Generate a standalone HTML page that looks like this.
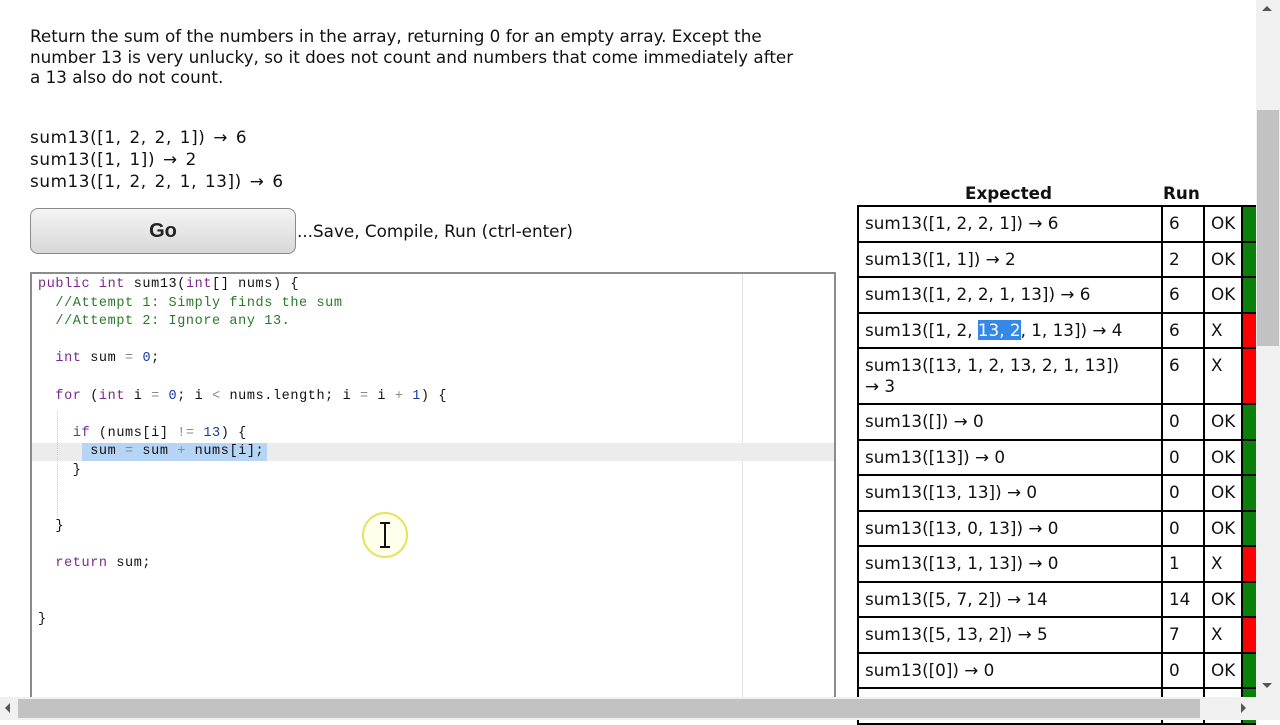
<!DOCTYPE html>
<html><head><meta charset="utf-8"><style>
*{margin:0;padding:0;box-sizing:border-box}
body{width:1280px;height:720px;overflow:hidden;background:#fff;position:relative;font-family:"DejaVu Sans","Liberation Sans",sans-serif;color:#111}
.t{position:absolute;font-size:16.8px;white-space:nowrap}
.go{position:absolute;left:30px;top:208px;width:266px;height:46px;border:1px solid #8a8a8a;border-radius:8px;background:linear-gradient(#f4f4f4,#d8d8d8);font-family:"Liberation Sans",sans-serif;font-weight:bold;font-size:20px;text-align:center;line-height:44px;color:#222}
.ed{position:absolute;left:30px;top:272px;width:806px;height:440px;border:2px solid #8c8c8c;border-bottom:none}
.code{position:absolute;left:38px;font-family:"Liberation Mono",monospace;font-size:13.5px;white-space:pre;color:#111;letter-spacing:0.6px}
.k{color:#7a2a8c}.c{color:#2a7a2a}.n{color:#1a3aa0}.o{color:#888}
table{position:absolute;left:857px;top:205px;border-collapse:collapse;font-size:16.8px}
td{border:2px solid #000;padding:0 6px;height:35.5px;vertical-align:top;padding-top:6px;line-height:21px}
tr{height:35.5px}
td.e{width:304px}td.r{width:42px}td.s{width:38px}td.g{width:14px;background:#0a800a;border-right:none}td.x{width:14px;background:#f00;border-right:none}
</style></head><body>
<div class="t" style="left:30px;top:26px;line-height:20.6px">Return the sum of the numbers in the array, returning 0 for an empty array. Except the<br>number 13 is very unlucky, so it does not count and numbers that come immediately after<br>a 13 also do not count.</div>
<div class="t" style="left:30px;top:126px;line-height:22px;word-spacing:2px;letter-spacing:0.6px">sum13([1, 2, 2, 1]) → 6<br>sum13([1, 1]) → 2<br>sum13([1, 2, 2, 1, 13]) → 6</div>
<div class="go">Go</div>
<div class="t" style="left:297px;top:221px">...Save, Compile, Run (ctrl-enter)</div>
<div class="ed"></div>
<div style="position:absolute;left:742px;top:274px;width:1px;height:423px;background:#e4e4e4"></div>
<div style="position:absolute;left:32px;top:443px;width:802px;height:18px;background:#ececec"></div>
<div style="position:absolute;left:82px;top:443px;width:185px;height:18px;background:#b6d4f6"></div>
<div style="position:absolute;left:57px;top:412px;width:1px;height:105px;border-left:1px dotted #ccc"></div>
<div class="code" style="top:276px;line-height:18.6px"><span class="k">public int</span> sum13(<span class="k">int</span>[] nums) {
  <span class="c">//Attempt 1: Simply finds the sum</span>
  <span class="c">//Attempt 2: Ignore any 13.</span>

  <span class="k">int</span> sum <span class="o">=</span> <span class="n">0</span>;

  <span class="k">for</span> (<span class="k">int</span> i <span class="o">=</span> <span class="n">0</span>; i <span class="o">&lt;</span> nums.length; i <span class="o">=</span> i <span class="o">+</span> <span class="n">1</span>) {

    <span class="k">if</span> (nums[i] <span class="o">!=</span> <span class="n">13</span>) {
      sum <span class="o">=</span> sum <span class="o">+</span> nums[i];
    }


  }

  <span class="k">return</span> sum;


}</div>
<div style="position:absolute;left:362px;top:512px;width:46px;height:46px;border-radius:50%;border:2px solid #e8e060;background:rgba(255,255,200,0.35)"></div>
<div style="position:absolute;left:384px;top:523px;width:2px;height:24px;background:#111"></div>
<div style="position:absolute;left:380px;top:522px;width:10px;height:2px;background:#111"></div>
<div style="position:absolute;left:380px;top:546px;width:10px;height:2px;background:#111"></div>
<div style="position:absolute;left:965px;top:183px;font-weight:bold;font-size:16.8px">Expected</div>
<div style="position:absolute;left:1163px;top:183px;font-weight:bold;font-size:16.8px">Run</div>
<table>
<tr><td class="e">sum13([1, 2, 2, 1]) → 6</td><td class="r">6</td><td class="s">OK</td><td class="g"></td></tr>
<tr><td class="e">sum13([1, 1]) → 2</td><td class="r">2</td><td class="s">OK</td><td class="g"></td></tr>
<tr><td class="e">sum13([1, 2, 2, 1, 13]) → 6</td><td class="r">6</td><td class="s">OK</td><td class="g"></td></tr>
<tr><td class="e">sum13([1, 2, <span style="background:#3388e8;color:#fff">13, 2</span>, 1, 13]) → 4</td><td class="r">6</td><td class="s">X</td><td class="x"></td></tr>
<tr style="height:56px"><td class="e" style="height:56px">sum13([13, 1, 2, 13, 2, 1, 13])<br>→ 3</td><td class="r">6</td><td class="s">X</td><td class="x"></td></tr>
<tr><td class="e">sum13([]) → 0</td><td class="r">0</td><td class="s">OK</td><td class="g"></td></tr>
<tr><td class="e">sum13([13]) → 0</td><td class="r">0</td><td class="s">OK</td><td class="g"></td></tr>
<tr><td class="e">sum13([13, 13]) → 0</td><td class="r">0</td><td class="s">OK</td><td class="g"></td></tr>
<tr><td class="e">sum13([13, 0, 13]) → 0</td><td class="r">0</td><td class="s">OK</td><td class="g"></td></tr>
<tr><td class="e">sum13([13, 1, 13]) → 0</td><td class="r">1</td><td class="s">X</td><td class="x"></td></tr>
<tr><td class="e">sum13([5, 7, 2]) → 14</td><td class="r">14</td><td class="s">OK</td><td class="g"></td></tr>
<tr><td class="e">sum13([5, 13, 2]) → 5</td><td class="r">7</td><td class="s">X</td><td class="x"></td></tr>
<tr><td class="e">sum13([0]) → 0</td><td class="r">0</td><td class="s">OK</td><td class="g"></td></tr>
<tr><td class="e">sum13([13, 2]) → 0</td><td class="r">0</td><td class="s">OK</td><td class="g"></td></tr>
</table>
<div style="position:absolute;left:1256px;top:0;width:24px;height:697px;background:#f0f0f0"></div>
<div style="position:absolute;left:1257px;top:110px;width:22px;height:236px;background:#c2c2c2"></div>
<div style="position:absolute;left:1262px;top:6px;width:0;height:0;border-left:5px solid transparent;border-right:5px solid transparent;border-bottom:5px solid #555"></div>
<div style="position:absolute;left:1262px;top:683px;width:0;height:0;border-left:5px solid transparent;border-right:5px solid transparent;border-top:5px solid #555"></div>
<div style="position:absolute;left:0;top:697px;width:1280px;height:23px;background:#f0f0f0"></div>
<div style="position:absolute;left:18px;top:699px;width:1182px;height:19px;background:#c2c2c2"></div>
<div style="position:absolute;left:5px;top:703px;width:0;height:0;border-top:5px solid transparent;border-bottom:5px solid transparent;border-right:5px solid #555"></div>
<div style="position:absolute;left:1241px;top:703px;width:0;height:0;border-top:5px solid transparent;border-bottom:5px solid transparent;border-left:5px solid #555"></div>
</body></html>
